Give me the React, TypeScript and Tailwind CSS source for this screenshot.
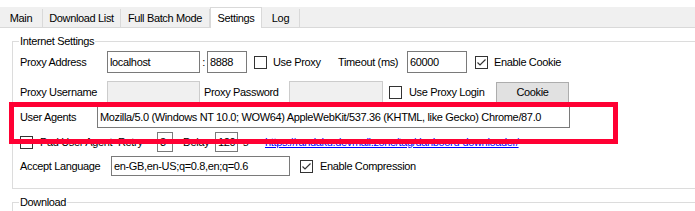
import React from 'react';

const Check = ({ checked = false }: { checked?: boolean }) => (
  <span className="w-[13px] h-[13px] shrink-0 border border-[#333] bg-white flex items-center justify-center">
    {checked && (
      <svg width="11" height="11" viewBox="0 0 11 11">
        <polyline points="1.5,5.5 4,8 9.5,2.5" fill="none" stroke="#333" strokeWidth="1.2" />
      </svg>
    )}
  </span>
);

const Field = ({ w, value = '', h = 'h-[22px]', disabled = false }: { w: string; value?: string; h?: string; disabled?: boolean }) => (
  <div
    className={`${w} ${h} shrink-0 border px-[2px] flex items-center overflow-hidden whitespace-nowrap ${
      disabled ? 'bg-[#f0f0f0] border-[#cccccc]' : 'bg-white border-[#7a7a7a]'
    }`}
  >
    {value}
  </div>
);

const tabs = ['Main', 'Download List', 'Full Batch Mode', 'Settings', 'Log'];
const tabWidths = ['w-[43px]', 'w-[78px]', 'w-[89px]', 'w-[52px]', 'w-[38px]'];

export default function App() {
  return (
    <div
      className="relative w-[695px] h-[211px] bg-white overflow-hidden text-[11px] tracking-[-0.35px] text-black"
      style={{ fontFamily: '"Liberation Sans", Arial, sans-serif' }}
    >
      {/* tab strip */}
      <div className="mt-[7px] h-[21px] bg-[#f0f0f0] border-b border-[#d9d9d9] flex items-stretch">
        {tabs.map((t, i) =>
          t === 'Settings' ? (
            <div
              key={t}
              className={`${tabWidths[i]} -mb-[1px] bg-white border border-b-0 border-[#d9d9d9] flex justify-center pt-[2px]`}
            >
              {t}
            </div>
          ) : (
            <div
              key={t}
              className={`${tabWidths[i]} mt-[2px] border-r border-[#d9d9d9] flex justify-center items-center`}
            >
              {t}
            </div>
          )
        )}
      </div>

      {/* Internet Settings */}
      <fieldset className="mt-[7px] ml-[12px] w-[700px] border border-[#dcdcdc] pl-[7px] pb-[12px]">
        <legend className="px-[1px] -ml-[1px] leading-[13px]">Internet Settings</legend>

        <div className="mt-[3px] h-[22px] flex items-center">
          <span className="w-[87px] shrink-0">Proxy Address</span>
          <Field w="w-[93px]" value="localhost" />
          <span className="w-[7px] text-center shrink-0">:</span>
          <Field w="w-[40px]" value="8888" />
          <span className="ml-[7px]"><Check /></span>
          <span className="ml-[6px] w-[65px] shrink-0">Use Proxy</span>
          <span className="w-[69px] shrink-0">Timeout (ms)</span>
          <Field w="w-[60px]" value="60000" />
          <span className="ml-[8px]"><Check checked /></span>
          <span className="ml-[6px]">Enable Cookie</span>
        </div>

        <div className="mt-[8px] h-[22px] flex items-center">
          <span className="w-[87px] shrink-0">Proxy Username</span>
          <Field w="w-[93px]" disabled />
          <span className="ml-[4px] w-[85px] shrink-0">Proxy Password</span>
          <Field w="w-[94px]" disabled />
          <span className="ml-[6px]"><Check /></span>
          <span className="ml-[7px] w-[87px] shrink-0">Use Proxy Login</span>
          <div className="w-[73px] h-[21px] bg-[#e1e1e1] border border-[#adadad] flex items-center justify-center">
            Cookie
          </div>
        </div>

        <div className="mt-[3px] h-[22px] flex items-center">
          <span className="w-[77px] shrink-0">User Agents</span>
          <Field w="w-[473px]" value="Mozilla/5.0 (Windows NT 10.0; WOW64) AppleWebKit/537.36 (KHTML, like Gecko) Chrome/87.0" />
        </div>

        <div className="mt-[4px] h-[20px] flex items-center">
          <Check />
          <span className="ml-[7px] w-[78px] shrink-0">Pad User Agent</span>
          <span className="w-[39px] shrink-0">Retry</span>
          <Field w="w-[16px]" h="h-[20px]" value="3" />
          <span className="ml-[10px] w-[32px] shrink-0">Delay</span>
          <Field w="w-[23px]" h="h-[20px]" value="120" />
          <span className="ml-[5px] w-[22px] shrink-0">s</span>
          <a className="text-[#0000ff] underline whitespace-nowrap">
            https://randaku.devmall.zone/tag/danbooru-downloader/
          </a>
        </div>

        <div className="mt-[4px] h-[20px] flex items-center">
          <span className="w-[91px] shrink-0">Accept Language</span>
          <Field w="w-[179px]" h="h-[20px]" value="en-GB,en-US;q=0.8,en;q=0.6" />
          <span className="ml-[10px]"><Check checked /></span>
          <span className="ml-[7px]">Enable Compression</span>
        </div>
      </fieldset>

      {/* Download */}
      <fieldset className="mt-[7px] ml-[12px] w-[700px] h-[40px] border border-[#dcdcdc] pl-[7px]">
        <legend className="px-[1px] -ml-[1px] leading-[13px]">Download</legend>
      </fieldset>

      {/* red highlight annotation */}
      <div className="absolute left-[9px] top-[102px] w-[609px] h-[42px] border-[5px] border-[#ff0033] pointer-events-none" />
    </div>
  );
}
